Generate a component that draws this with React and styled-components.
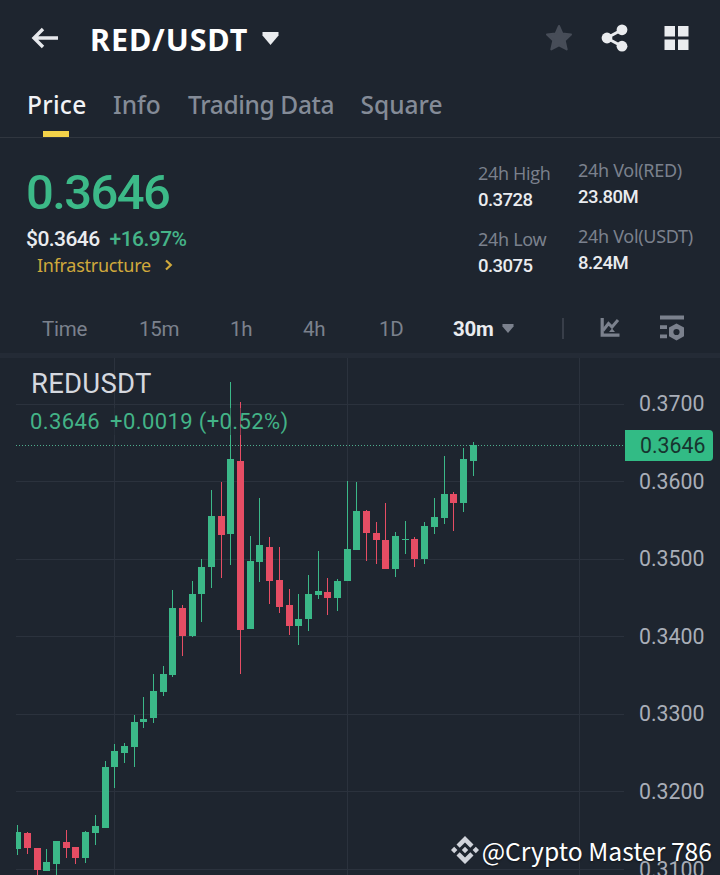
import styled, { createGlobalStyle } from "styled-components";

const GlobalStyle = createGlobalStyle`
  * {
    box-sizing: border-box;
  }

  body {
    margin: 0;
    background-color: #1e252f;
    font-family: "Noto Sans", "Open Sans", sans-serif;
    overflow: hidden;
  }
`;

const Page = styled.main`
  position: relative;
  display: flex;
  flex-direction: column;
  width: 720px;
  height: 875px;
  overflow: hidden;
  color: #eaecef;
  white-space: nowrap;
`;

const Header = styled.header`
  display: flex;
  flex: none;
  align-items: center;
  height: 76px;
  padding: 0 31px;
`;

const Title = styled.h1`
  margin: 0 15px 0 32px;
  padding-top: 2px;
  width: 157px;
  font-size: 30.5px;
  font-weight: 700;
  line-height: 40px;
  letter-spacing: 0.9px;
  color: #fff;
`;

const Actions = styled.div`
  display: flex;
  align-items: center;
  margin-left: auto;
`;

const ShareSlot = styled.div`
  display: flex;
  margin: 0 36px 0 28px;
`;

const Tabs = styled.nav`
  display: grid;
  flex: none;
  grid-template-columns: 86px 75px 172.5px auto;
  height: 62px;
  padding-left: 27px;
  border-bottom: 1px solid #30363f;
`;

const Tab = styled.div`
  display: flex;
  flex-direction: column;
  justify-content: space-between;
  justify-self: start;
  align-items: center;
  padding-top: 13px;
  font-size: 24.5px;
  font-weight: 500;
  line-height: 32px;
  letter-spacing: ${({ $spacing }) => $spacing}px;
  color: ${({ $active }) => ($active ? "#f2f3f6" : "#848b97")};

  &::after {
    content: "";
    width: 26px;
    height: 6px;
    margin-right: 1px;
    background-color: ${({ $active }) => ($active ? "#f3d249" : "transparent")};
  }
`;

const Summary = styled.section`
  display: flex;
  flex: none;
  height: 165px;
  padding-left: 27px;
`;

const PriceColumn = styled.div`
  width: 451px;
  padding-top: 29px;
`;

const LastPrice = styled.p`
  margin: 0 0 0 -1px;
  font-family: Roboto, sans-serif;
  font-size: 49px;
  font-weight: 500;
  line-height: 52px;
  letter-spacing: -1.6px;
  color: #3cb988;
`;

const PriceLine = styled.p`
  display: flex;
  gap: 10px;
  margin: 0 0 0 -1px;
  padding-top: 6px;
  font-family: Roboto, sans-serif;
  font-size: 21px;
  font-weight: 500;
  line-height: 28px;
  letter-spacing: -0.55px;
`;

const Change = styled.span`
  color: #45b488;
`;

const Category = styled.a`
  display: flex;
  align-items: center;
  gap: 14px;
  padding-left: 10px;
  font-size: 18px;
  line-height: 24px;
  letter-spacing: -0.28px;
  color: #d0a93c;
`;

const StatColumn = styled.dl`
  width: 100px;
  margin: 0;
  padding-top: ${({ $top }) => $top}px;
`;

const StatLabel = styled.dt`
  font-family: ${({ $font }) => $font || "inherit"};
  font-size: 18px;
  line-height: 24px;
  padding-bottom: 2px;
  letter-spacing: -0.3px;
  color: #7b818d;
`;

const StatValue = styled.dd`
  margin: 0 0 14px;
  font-family: Roboto, sans-serif;
  font-size: 18.5px;
  font-weight: 500;
  line-height: 26px;
  letter-spacing: -0.55px;
  color: #eaecef;
`;

const IntervalBar = styled.div`
  display: grid;
  flex: none;
  grid-template-columns: 97px 91px 73px 76px 74px 109px 38px 59px auto;
  align-items: center;
  height: 50px;
  padding-left: 42px;
`;

const Interval = styled.span`
  display: flex;
  align-items: center;
  gap: 8px;
  padding-top: 1px;
  font-family: Roboto, sans-serif;
  font-size: 20.5px;
  font-weight: ${({ $active }) => ($active ? 700 : 400)};
  letter-spacing: -0.25px;
  color: ${({ $active }) => ($active ? "#eaecef" : "#7b818d")};
`;

const Divider = styled.span`
  width: 2px;
  height: 21px;
  background-color: #383e49;
`;

const ChartPanel = styled.section`
  position: relative;
  display: flex;
  flex: none;
  height: 522px;
  overflow: hidden;
  border-top: 5px solid #242b36;
  font-family: Roboto, sans-serif;
`;

const Plot = styled.svg`
  display: block;
  flex: none;
`;

const Legend = styled.div`
  position: absolute;
  top: 8px;
  left: 30px;
`;

const Symbol = styled.h2`
  margin: 0;
  padding-left: 1px;
  font-size: 27.5px;
  font-weight: 400;
  line-height: 36px;
  letter-spacing: 0.25px;
  color: #d5d8df;
`;

const Quote = styled.p`
  display: flex;
  gap: 10px;
  margin: 6px 0 0;
  font-size: 22px;
  line-height: 27px;
  letter-spacing: 0.4px;
  color: #43b387;
  background-color: rgba(30, 37, 47, 0.4);
`;

const Axis = styled.div`
  display: flex;
  flex-direction: column;
  gap: 49.6px;
  padding: 32px 0 0 14px;
`;

const AxisLabel = styled.span`
  flex: none;
  height: 28px;
  font-size: 21.3px;
  line-height: 28px;
  color: #a9aeb8;
`;

const PriceTag = styled.span`
  position: absolute;
  top: 72px;
  left: 625px;
  width: 88px;
  height: 31px;
  padding-left: 15px;
  border-radius: 0 4px 4px 0;
  font-size: 21.3px;
  line-height: 32px;
  color: #17352f;
  background-color: #32bb85;
`;

const Watermark = styled.div`
  position: absolute;
  right: 8px;
  bottom: 7px;
  display: flex;
  align-items: center;
  gap: 3px;
  font-family: "Noto Sans CJK SC", sans-serif;
  font-size: 24.7px;
  line-height: 36px;
  color: #fff;
  text-shadow: 0 1px 2px rgba(0, 0, 0, 0.5);
`;

const UP = "#3bb888";
const DOWN = "#e64d64";

// Each candle: wick top, body top, body bottom, wick bottom, falling flag
const candles = [
  [825, 832, 849, 855],
  [832, 833, 848, 854, 1],
  [848, 848, 870, 876, 1],
  [849, 862, 871, 871],
  [841, 841, 864, 876],
  [830, 842, 848, 858, 1],
  [847, 847, 858, 864, 1],
  [831, 832, 858, 863],
  [815, 826, 833, 845],
  [761, 767, 828, 828],
  [744, 751, 767, 788],
  [743, 746, 753, 763],
  [715, 722, 747, 767],
  [697, 719, 722, 728],
  [674, 691, 718, 723],
  [666, 674, 692, 696],
  [590, 608, 675, 677],
  [605, 608, 636, 656, 1],
  [581, 594, 636, 637],
  [559, 567, 594, 622],
  [490, 516, 567, 588],
  [482, 516, 535, 578, 1],
  [382, 459, 534, 565],
  [402, 461, 630, 674, 1],
  [536, 561, 629, 629],
  [498, 545, 562, 582],
  [537, 547, 581, 604, 1],
  [547, 580, 607, 613, 1],
  [589, 605, 626, 635, 1],
  [594, 619, 626, 645],
  [575, 594, 619, 631],
  [551, 591, 595, 599],
  [578, 592, 598, 615, 1],
  [579, 581, 598, 611],
  [481, 549, 581, 581],
  [482, 511, 550, 550],
  [510, 511, 533, 561, 1],
  [522, 533, 540, 564, 1],
  [503, 540, 569, 569, 1],
  [532, 536, 569, 577],
  [521, 539, 540, 554],
  [537, 539, 559, 567, 1],
  [522, 526, 559, 564],
  [498, 517, 527, 534],
  [456, 494, 518, 524],
  [492, 494, 503, 531, 1],
  [448, 459, 503, 512],
  [442, 445, 461, 476],
];

const intervals = ["Time", "15m", "1h", "4h", "1D"];
const prices = ["0.3700", "0.3600", "0.3500", "0.3400", "0.3300", "0.3200", "0.3100"];
const rows = [404, 481, 559, 636, 714, 791, 869];
const columns = [114, 347, 579];

function CandleChart() {
  return (
    <Plot width="625" height="517" viewBox="0 358 625 517">
      <defs>
        <clipPath id="plot">
          <rect x="16" y="358" width="609" height="517" />
        </clipPath>
      </defs>
      {rows.map((y) => (
        <rect key={y} x="16" y={y} width="608" height="1" fill="#2b323d" />
      ))}
      {columns.map((x) => (
        <rect key={x} x={x} y="358" width="1" height="517" fill="#2b323d" />
      ))}
      <line
        x1="16"
        x2="625"
        y1="445.5"
        y2="445.5"
        stroke="#4fae8d"
        strokeDasharray="1 2"
      />
      <g clipPath="url(#plot)">
        {candles.map(([high, top, bottom, low, falling], index) => {
          const x = Math.floor(17.82 + 9.687 * index);
          return (
            <g key={index} fill={falling ? DOWN : UP}>
              <rect x={x} y={high} width="1" height={low - high} />
              <rect x={x - 3} y={top} width="7" height={bottom - top} />
            </g>
          );
        })}
      </g>
    </Plot>
  );
}

function BackIcon() {
  return (
    <svg width="27" height="22" viewBox="0 0 27 22" fill="none">
      <path
        d="M12 2 L3 11 L12 20 M3 11 H27"
        stroke="#e6e8ec"
        strokeWidth="3.4"
      />
    </svg>
  );
}

function StarIcon() {
  return (
    <svg width="28" height="28" viewBox="0 0 28 28">
      <path
        d="M14 2 L17.4 9.6 L26 10.5 L19.7 16.4 L21.7 25.4 L14 21.4 L6.3 25.4 L8.3 16.4 L2 10.5 L10.6 9.6 Z"
        fill="#474d58"
        stroke="#474d58"
        strokeWidth="2"
        strokeLinejoin="round"
      />
    </svg>
  );
}

function ShareIcon() {
  return (
    <svg width="27" height="28" viewBox="0 0 27 28" fill="#eaecef">
      <path d="M20.5 6 L5.8 14 L20.5 22" fill="none" stroke="#eaecef" strokeWidth="3" />
      <circle cx="6" cy="14" r="5.4" />
      <circle cx="21" cy="5.8" r="5.4" />
      <circle cx="21" cy="22.2" r="5.4" />
    </svg>
  );
}

function GridIcon() {
  return (
    <svg width="25" height="24" viewBox="0 0 25 24">
      <path
        d="M0.5 0 H11 V10.5 H0.5 Z M14 0 H24.5 V10.5 H14 Z M0.5 13.5 H11 V24 H0.5 Z M14 13.5 H24.5 V24 H14 Z"
        fill="#eaecef"
      />
    </svg>
  );
}

function DrawIcon() {
  return (
    <svg width="20" height="20" viewBox="0 0 20 20" fill="none" stroke="#7b818d">
      <path d="M2.2 0 V17.2 H19.5" strokeWidth="3.2" />
      <path d="M3 12.5 L8.5 5.5 L12 9 L18 2" strokeWidth="3" />
      <path d="M12 10.5 L15 14 H9 Z" fill="#7b818d" stroke="none" />
    </svg>
  );
}

function SettingsIcon() {
  return (
    <svg width="25" height="26" viewBox="-1 0 25 26" fill="#7b818d">
      <path d="M0 0.5 H24 V4.5 H0 Z M0 10.2 H7 V14 H0 Z M0 19.5 H7 V23.3 H0 Z" />
      <path
        fillRule="evenodd"
        d="M16.5 8.4 L24 12.6 V21.3 L16.5 25.6 L9 21.3 V12.6 Z M16.5 13.9 A3.1 3.1 0 1 0 16.5 20.1 A3.1 3.1 0 1 0 16.5 13.9 Z"
      />
    </svg>
  );
}

function Caret({ width, height, color }) {
  return (
    <svg width={width} height={height} viewBox="0 0 16 13">
      <path d="M0 0 H16 V3.5 L8 13 L0 3.5 Z" fill={color} />
    </svg>
  );
}

function BinanceLogo() {
  return (
    <svg width="28" height="28" viewBox="0 0 28 28" fill="#d0d3da">
      <path d="M14 0 L22.5 8.5 L19.3 11.7 L14 6.4 L8.7 11.7 L5.5 8.5 Z" />
      <path d="M14 28 L22.5 19.5 L19.3 16.3 L14 21.6 L8.7 16.3 L5.5 19.5 Z" />
      <path d="M3.2 10.8 L6.4 14 L3.2 17.2 L0 14 Z M14 10.8 L17.2 14 L14 17.2 L10.8 14 Z M24.8 10.8 L28 14 L24.8 17.2 L21.6 14 Z" />
    </svg>
  );
}

export default function App() {
  return (
    <Page>
      <GlobalStyle />
      <Header>
        <BackIcon />
        <Title>RED/USDT</Title>
        <Caret width="17" height="13" color="#eaecef" />
        <Actions>
          <StarIcon />
          <ShareSlot>
            <ShareIcon />
          </ShareSlot>
          <GridIcon />
        </Actions>
      </Header>
      <Tabs>
        <Tab $active $spacing={0.3}>
          Price
        </Tab>
        <Tab $spacing={0}>Info</Tab>
        <Tab $spacing={-0.35}>Trading Data</Tab>
        <Tab $spacing={0}>Square</Tab>
      </Tabs>
      <Summary>
        <PriceColumn>
          <LastPrice>0.3646</LastPrice>
          <PriceLine>
            <span>$0.3646</span>
            <Change>+16.97%</Change>
          </PriceLine>
          <Category>
            Infrastructure
            <svg width="8" height="12" viewBox="0 0 8 12" fill="none">
              <path d="M1 1.5 L5.8 6 L1 10.5" stroke="#d0a93c" strokeWidth="2.2" />
            </svg>
          </Category>
        </PriceColumn>
        <StatColumn $top={23}>
          <StatLabel $font='"Open Sans", sans-serif'>24h High</StatLabel>
          <StatValue>0.3728</StatValue>
          <StatLabel>24h Low</StatLabel>
          <StatValue>0.3075</StatValue>
        </StatColumn>
        <StatColumn $top={20}>
          <StatLabel>24h Vol(RED)</StatLabel>
          <StatValue>23.80M</StatValue>
          <StatLabel>24h Vol(USDT)</StatLabel>
          <StatValue>8.24M</StatValue>
        </StatColumn>
      </Summary>
      <IntervalBar>
        {intervals.map((interval) => (
          <Interval key={interval}>{interval}</Interval>
        ))}
        <Interval $active>
          30m
          <Caret width="12" height="9" color="#7b818d" />
        </Interval>
        <Divider />
        <DrawIcon />
        <SettingsIcon />
      </IntervalBar>
      <ChartPanel>
        <CandleChart />
        <Axis>
          {prices.map((price) => (
            <AxisLabel key={price}>{price}</AxisLabel>
          ))}
        </Axis>
        <Legend>
          <Symbol>REDUSDT</Symbol>
          <Quote>
            <span>0.3646</span>
            <span>+0.0019 (+0.52%)</span>
          </Quote>
        </Legend>
        <PriceTag>0.3646</PriceTag>
      </ChartPanel>
      <Watermark>
        <BinanceLogo />
        @Crypto Master 786
      </Watermark>
    </Page>
  );
}
